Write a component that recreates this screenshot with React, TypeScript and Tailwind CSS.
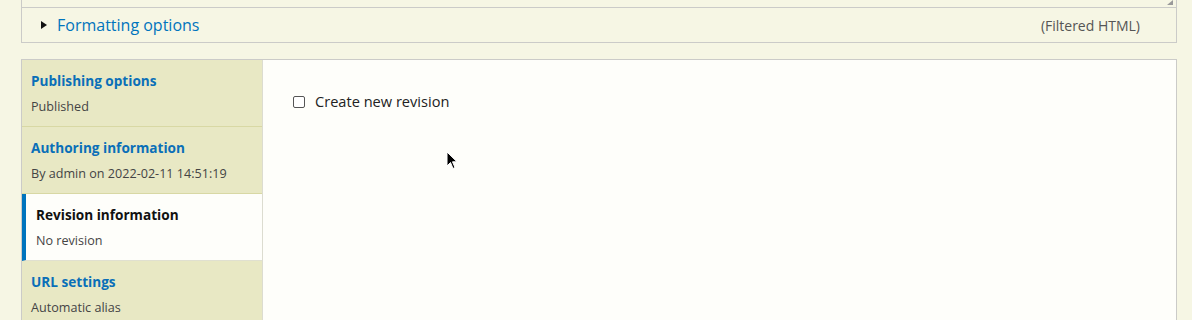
import React from "react";

const tabs = [
  { title: "Publishing options", summary: "Published" },
  { title: "Authoring information", summary: "By admin on 2022-02-11 14:51:19" },
  { title: "Revision information", summary: "No revision", active: true },
  { title: "URL settings", summary: "Automatic alias" },
];

export default function App() {
  return (
    <div className="relative h-[320px] w-full overflow-hidden bg-[#f6f6e4] pl-[21px] pr-[15px] font-['Open_Sans',sans-serif]">
      {/* text format wrapper */}
      <div className="border-x border-b border-[#cbcbc8]">
        <div className="relative h-[8px] border-b border-[#cbcbc8]">
          <svg className="absolute right-[3px] top-0" width="10" height="5" viewBox="0 0 10 5">
            <path d="M10 0 L10 5 L4 5 Z" fill="#9a9a9a" />
          </svg>
        </div>
        <div className="flex h-[34px] items-center justify-between pl-[19px] pr-[36px]">
          <div className="flex items-center gap-[10px]">
            <svg width="6" height="8" viewBox="0 0 6 8">
              <path d="M0 0 L6 4 L0 8 Z" fill="#111" />
            </svg>
            <span className="text-[16px] text-[#0074bd]">Formatting options</span>
          </div>
          <span className="text-[14px] text-[#555]">(Filtered HTML)</span>
        </div>
      </div>

      {/* vertical tabs */}
      <div className="mt-[16px] flex border border-[#cbcbc8]">
        <ul className="w-[240px] shrink-0 bg-[#e8e8c4]">
          {tabs.map((t) =>
            t.active ? (
              <li
                key={t.title}
                className="-mr-px border-b border-l-[4px] border-b-[#e0e0d0] border-l-[#0074bd] bg-[#fefefa] pb-[10px] pl-[10px] pt-[12px]"
              >
                <div className="text-[13.6px] font-bold leading-[18px] text-[#111]">{t.title}</div>
                <div className="mt-[8px] text-[12.6px] leading-[18px] text-[#444]">{t.summary}</div>
              </li>
            ) : (
              <li key={t.title} className="border-b border-[#d8d8a4] pb-[10px] pl-[9px] pt-[12px]">
                <div className="text-[13.6px] font-bold leading-[18px] text-[#0a6fb8]">{t.title}</div>
                <div className="mt-[8px] text-[12.6px] leading-[18px] text-[#444]">{t.summary}</div>
              </li>
            )
          )}
        </ul>
        <div className="flex-1 border-l border-[#dcdcd0] bg-[#fefefa] pl-[30px] pt-[31px]">
          <label className="flex items-center gap-[10px] text-[14.6px] text-[#222]">
            <span className="h-[12px] w-[12px] rounded-[2px] border border-[#555] bg-white" />
            Create new revision
          </label>
        </div>
      </div>

      {/* mouse cursor */}
      <svg className="absolute left-[446px] top-[151px]" width="12" height="20" viewBox="0 0 12 20">
        <path
          d="M1 1 L1 15 L4.5 11.5 L7 17.5 L9 16.5 L6.5 10.8 L11 10.8 Z"
          fill="#000"
          stroke="#fff"
          strokeWidth="1"
        />
      </svg>
    </div>
  );
}
